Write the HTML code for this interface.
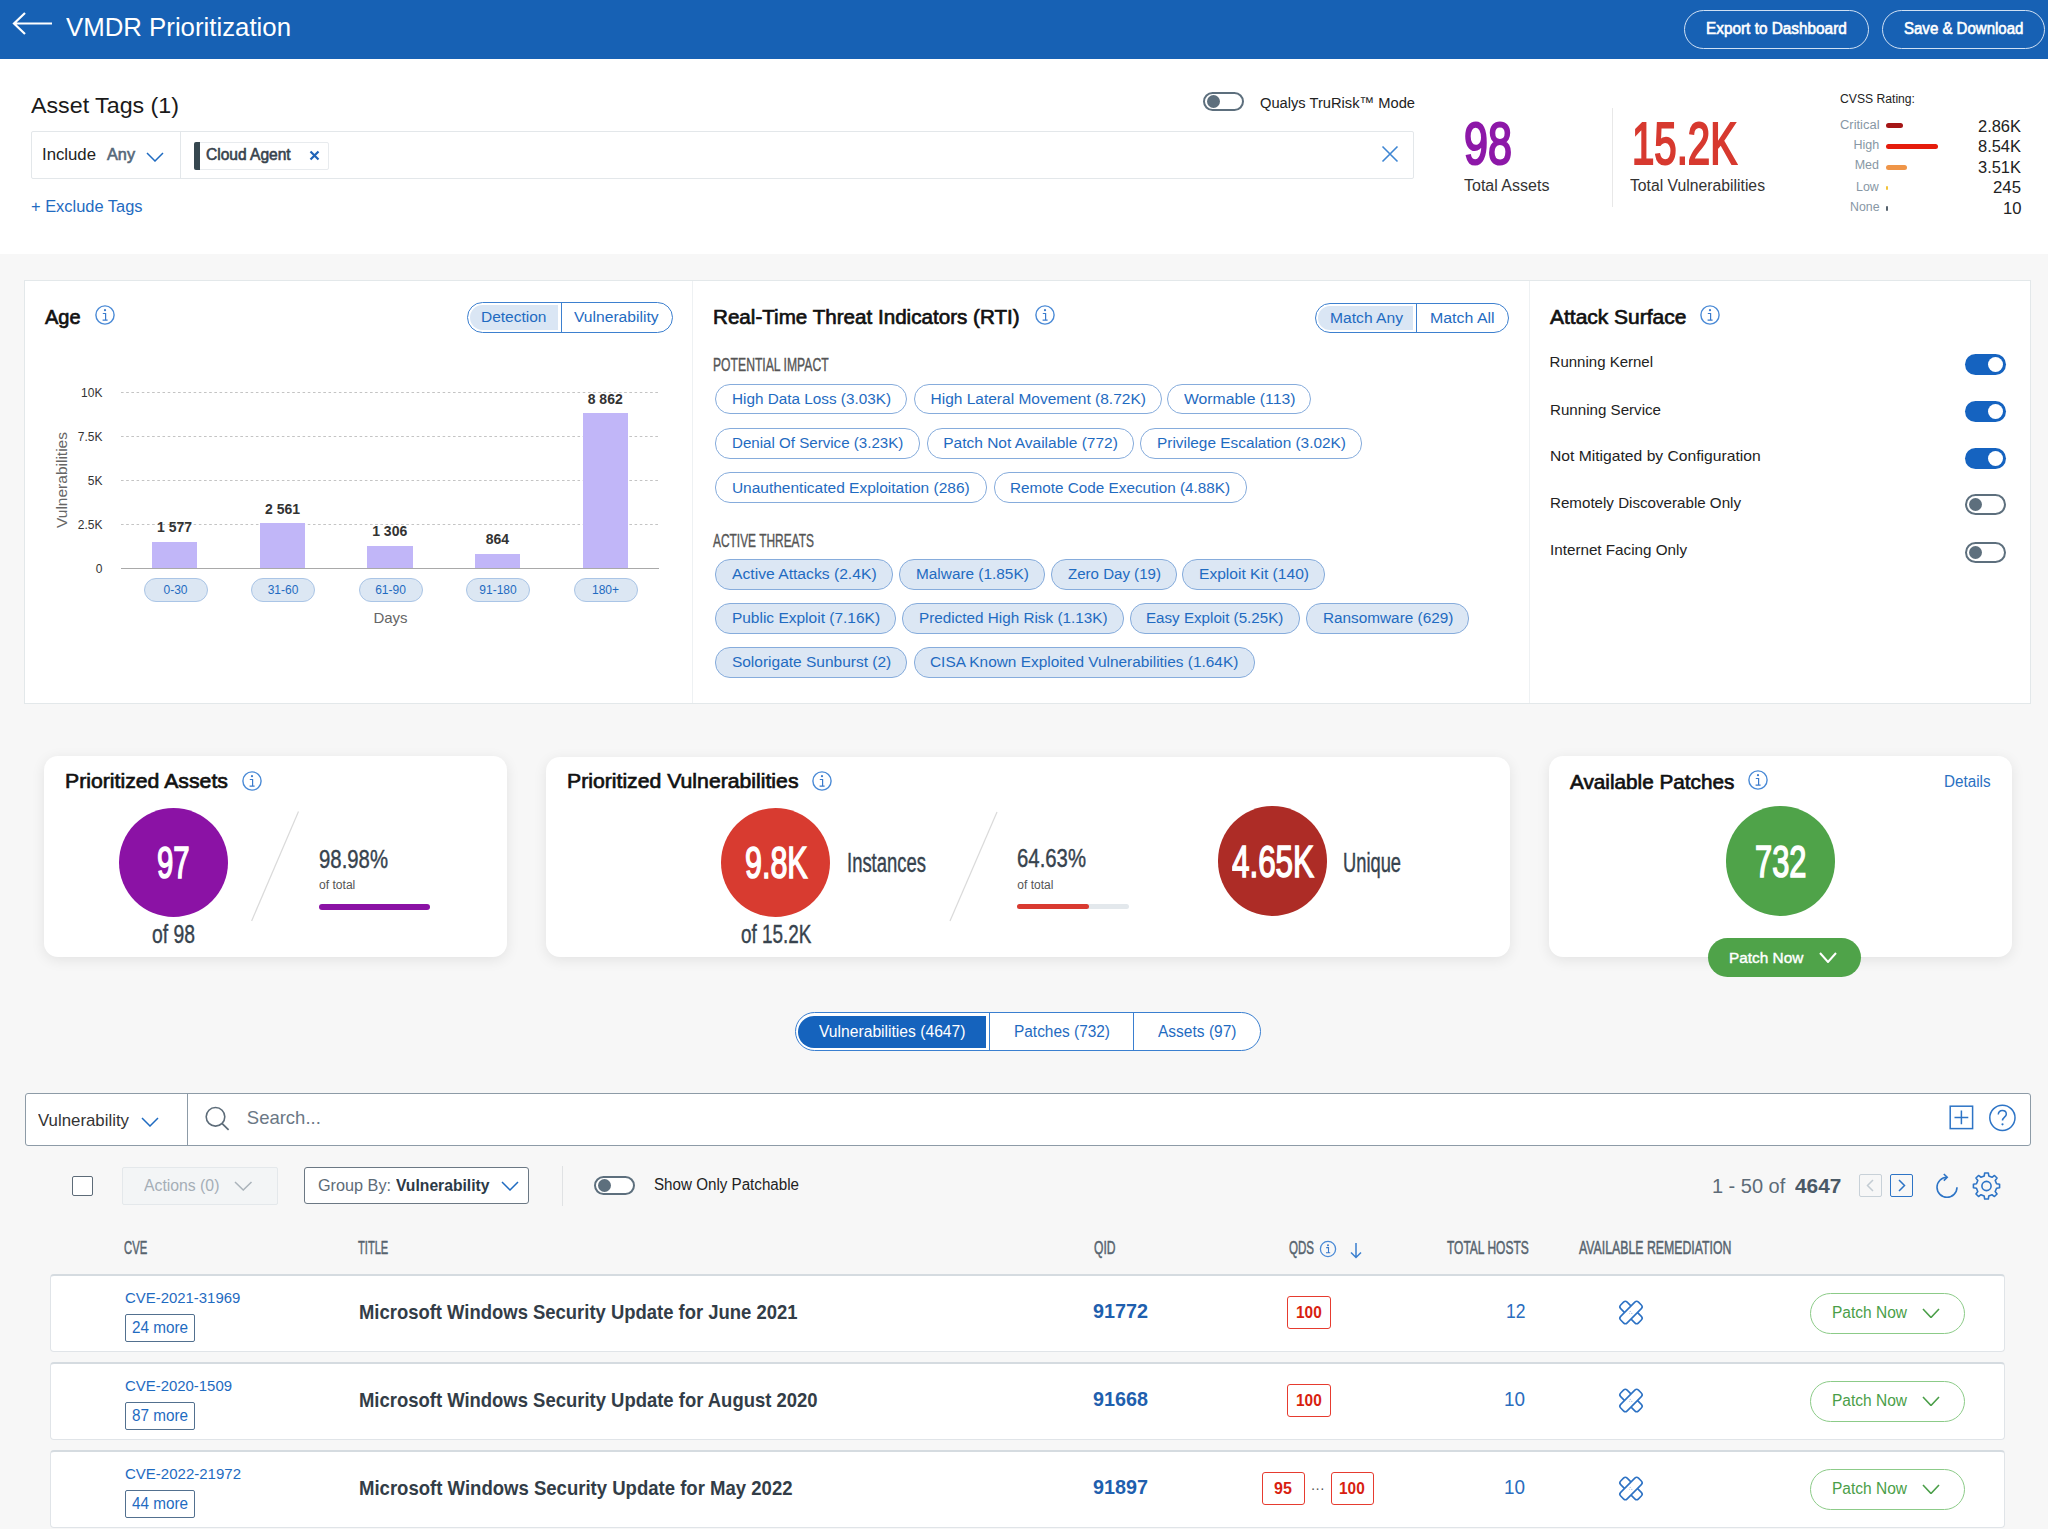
<!DOCTYPE html>
<html><head><meta charset="utf-8">
<style>
*{box-sizing:border-box;margin:0;padding:0}
html,body{width:2048px;height:1529px;overflow:hidden;background:#f7f7f7;font-family:"Liberation Sans",sans-serif;color:#222}
.a{position:absolute;white-space:nowrap}
</style></head><body>
<div class="a" style="left:0.0px;top:0.0px;width:2048.0px;height:59.0px;background:#1761b4"></div>
<svg class="a" style="left:12px;top:11px" width="42" height="25" viewBox="0 0 42 25"><path d="M2 12.5H40M13 2L2 12.5L13 23" fill="none" stroke="#fff" stroke-width="2.2"/></svg>
<div class="a" style="left:65.6px;top:13.9px;font-size:26px;line-height:1;color:#fff;transform:scaleX(0.9919);transform-origin:0 0;">VMDR Prioritization</div>
<div class="a" style="left:1684.0px;top:10.0px;width:185.0px;height:39.0px;border:1.5px solid #cfe0f4;border-radius:20px"></div>
<div class="a" style="left:1706.4px;top:21.4px;font-size:16px;line-height:1;color:#fff;transform:scaleX(0.9594);transform-origin:0 0;-webkit-text-stroke:0.6px currentColor;">Export to Dashboard</div>
<div class="a" style="left:1882.0px;top:10.0px;width:163.0px;height:39.0px;border:1.5px solid #cfe0f4;border-radius:20px"></div>
<div class="a" style="left:1904.0px;top:21.4px;font-size:16px;line-height:1;color:#fff;transform:scaleX(0.9387);transform-origin:0 0;-webkit-text-stroke:0.6px currentColor;">Save &amp; Download</div>
<div class="a" style="left:0.0px;top:59.0px;width:2048.0px;height:195.0px;background:#fff"></div>
<div class="a" style="left:31.3px;top:95.3px;font-size:22px;line-height:1;color:#1a1a1a;transform:scaleX(1.0556);transform-origin:0 0;">Asset Tags (1)</div>
<div class="a" style="left:31.0px;top:131.0px;width:1383.0px;height:48.0px;border:1px solid #e3e7ea;border-radius:2px"></div>
<div class="a" style="left:180.0px;top:131.0px;width:1.0px;height:48.0px;background:#e3e7ea"></div>
<div class="a" style="left:42.4px;top:146.9px;font-size:16px;line-height:1;color:#222;transform:scaleX(1.0466);transform-origin:0 0;">Include</div>
<div class="a" style="left:107.0px;top:146.9px;font-size:16px;line-height:1;color:#56687a;transform:scaleX(1.0156);transform-origin:0 0;-webkit-text-stroke:0.6px currentColor;">Any</div>
<svg class="a" style="left:146px;top:152px" width="18" height="10" viewBox="0 0 18 10"><path d="M1 1L9.0 9L17 1" fill="none" stroke="#1f6bc1" stroke-width="1.5"/></svg>
<div class="a" style="left:194.0px;top:142.0px;width:134.5px;height:28.0px;border:1px solid #e8ebee;border-radius:2px;background:#fff"></div>
<div class="a" style="left:194.0px;top:142.0px;width:6.0px;height:28.0px;background:#36474f;border-radius:2px 0 0 2px"></div>
<div class="a" style="left:206.0px;top:146.9px;font-size:16px;line-height:1;color:#37434d;transform:scaleX(0.9704);transform-origin:0 0;-webkit-text-stroke:0.6px currentColor;">Cloud Agent</div>
<svg class="a" style="left:309px;top:150px" width="11" height="11" viewBox="0 0 11 11"><path d="M1.5 1.5L9.5 9.5M9.5 1.5L1.5 9.5" stroke="#1f63b8" stroke-width="2.2"/></svg>
<svg class="a" style="left:1381px;top:145px" width="18" height="18" viewBox="0 0 18 18"><path d="M1.5 1.5L16.5 16.5M16.5 1.5L1.5 16.5" stroke="#3f86d3" stroke-width="1.6"/></svg>
<div class="a" style="left:31.0px;top:199.4px;font-size:16px;line-height:1;color:#1f6bc1;transform:scaleX(1.0261);transform-origin:0 0;">+ Exclude Tags</div>
<div class="a" style="left:1203.0px;top:92.0px;width:41.0px;height:19.0px;background:#fff;border:2px solid #5d6f7d;border-radius:9.5px"></div>
<div class="a" style="left:1207.0px;top:95.0px;width:13.0px;height:13.0px;background:#5d6f7d;border-radius:50%"></div>
<div class="a" style="left:1260.0px;top:94.8px;font-size:15.5px;line-height:1;color:#222;transform:scaleX(0.9471);transform-origin:0 0;">Qualys TruRisk™ Mode</div>
<div class="a" style="left:1464.0px;top:115.3px;font-size:58.5px;line-height:1;color:#8d18a8;transform:scaleX(0.7376);transform-origin:0 0;-webkit-text-stroke:2.2px currentColor;">98</div>
<div class="a" style="left:1464.0px;top:177.8px;font-size:16px;line-height:1;color:#333;">Total Assets</div>
<div class="a" style="left:1611.5px;top:108.0px;width:1.0px;height:99.0px;background:#e8e8e8"></div>
<div class="a" style="left:1632.0px;top:115.3px;font-size:58.5px;line-height:1;color:#d7392f;transform:scaleX(0.6868);transform-origin:0 0;-webkit-text-stroke:2.2px currentColor;">15.2K</div>
<div class="a" style="left:1630.0px;top:177.8px;font-size:16px;line-height:1;color:#333;transform:scaleX(0.9835);transform-origin:0 0;">Total Vulnerabilities</div>
<div class="a" style="left:1839.5px;top:92.6px;font-size:12px;line-height:1;color:#222;transform:scaleX(1.0130);transform-origin:0 0;">CVSS Rating:</div>
<div class="a" style="left:1839.5px;top:118.9px;font-size:12.5px;line-height:1;color:#8797a5;transform:scaleX(1.0341);transform-origin:0 0;">Critical</div>
<div class="a" style="left:1853.4px;top:139.4px;font-size:12.5px;line-height:1;color:#8797a5;">High</div>
<div class="a" style="left:1854.7px;top:159.4px;font-size:12.5px;line-height:1;color:#8797a5;">Med</div>
<div class="a" style="left:1856.2px;top:180.8px;font-size:12.5px;line-height:1;color:#8797a5;transform:scaleX(0.9943);transform-origin:0 0;">Low</div>
<div class="a" style="left:1849.5px;top:201.4px;font-size:12.5px;line-height:1;color:#8797a5;transform:scaleX(0.9872);transform-origin:0 0;">None</div>
<div class="a" style="left:1886.0px;top:123.2px;width:17.0px;height:5.0px;background:#a51616;border-radius:3px"></div>
<div class="a" style="left:1886.0px;top:144.3px;width:51.5px;height:5.0px;background:#e51c0c;border-radius:3px"></div>
<div class="a" style="left:1886.0px;top:164.9px;width:21.0px;height:5.0px;background:#ef9548;border-radius:3px"></div>
<div class="a" style="left:1886.0px;top:185.8px;width:2.0px;height:4.4px;background:#f2c33a;border-radius:3px"></div>
<div class="a" style="left:1886.0px;top:206.4px;width:1.5px;height:4.4px;background:#55616c;border-radius:3px"></div>
<div class="a" style="left:1978.0px;top:119.0px;font-size:16px;line-height:1;color:#222;transform:scaleX(1.0284);transform-origin:0 0;">2.86K</div>
<div class="a" style="left:1978.0px;top:139.0px;font-size:16px;line-height:1;color:#222;transform:scaleX(1.0284);transform-origin:0 0;">8.54K</div>
<div class="a" style="left:1978.0px;top:160.0px;font-size:16px;line-height:1;color:#222;transform:scaleX(1.0284);transform-origin:0 0;">3.51K</div>
<div class="a" style="left:1993.0px;top:180.2px;font-size:16px;line-height:1;color:#222;transform:scaleX(1.0488);transform-origin:0 0;">245</div>
<div class="a" style="left:2002.5px;top:201.2px;font-size:16px;line-height:1;color:#222;transform:scaleX(1.0395);transform-origin:0 0;">10</div>
<div class="a" style="left:24.0px;top:280.0px;width:2007.0px;height:424.0px;background:#fff;border:1px solid #e3e8ea"></div>
<div class="a" style="left:692.0px;top:281.0px;width:1.0px;height:422.0px;background:#eef1f3"></div>
<div class="a" style="left:1529.0px;top:281.0px;width:1.0px;height:422.0px;background:#eef1f3"></div>
<div class="a" style="left:45.0px;top:306.5px;font-size:20px;line-height:1;color:#111;-webkit-text-stroke:0.65px currentColor;">Age</div>
<svg class="a" style="left:94.5px;top:305px" width="20" height="20" viewBox="0 0 20 20"><circle cx="10.0" cy="10.0" r="9.1" fill="none" stroke="#4a8ad6" stroke-width="1.4"/><circle cx="10.0" cy="5.2" r="1.1" fill="#3a7acc"/><path d="M7.8 8.5H10.6V15.2M7.6 15.2H12.6" fill="none" stroke="#3a7acc" stroke-width="1.2"/></svg>
<div class="a" style="left:467.0px;top:302.0px;width:205.6px;height:31.0px;border:1.5px solid #3d80cf;border-radius:16px;overflow:hidden"></div>
<div class="a" style="left:470.0px;top:305.0px;width:88.0px;height:25.0px;background:#dae6f4;border-radius:13px 0 0 13px"></div>
<div class="a" style="left:560.5px;top:302.0px;width:1.5px;height:31.0px;background:#3d80cf"></div>
<div class="a" style="left:481.0px;top:309.0px;font-size:15.5px;line-height:1;color:#1f6bc1;">Detection</div>
<div class="a" style="left:574.0px;top:309.0px;font-size:15.5px;line-height:1;color:#1f6bc1;transform:scaleX(1.0088);transform-origin:0 0;">Vulnerability</div>
<div class="a" style="left:121.0px;top:391.5px;width:538.0px;height:1.5px;background-image:linear-gradient(90deg,#c4c4c4 45%,transparent 45%);background-size:5.2px 1.5px"></div>
<div class="a" style="left:81.1px;top:387.3px;font-size:12px;line-height:1;color:#333;">10K</div>
<div class="a" style="left:121.0px;top:435.5px;width:538.0px;height:1.5px;background-image:linear-gradient(90deg,#c4c4c4 45%,transparent 45%);background-size:5.2px 1.5px"></div>
<div class="a" style="left:77.8px;top:431.3px;font-size:12px;line-height:1;color:#333;">7.5K</div>
<div class="a" style="left:121.0px;top:479.5px;width:538.0px;height:1.5px;background-image:linear-gradient(90deg,#c4c4c4 45%,transparent 45%);background-size:5.2px 1.5px"></div>
<div class="a" style="left:87.8px;top:475.3px;font-size:12px;line-height:1;color:#333;">5K</div>
<div class="a" style="left:121.0px;top:523.5px;width:538.0px;height:1.5px;background-image:linear-gradient(90deg,#c4c4c4 45%,transparent 45%);background-size:5.2px 1.5px"></div>
<div class="a" style="left:77.8px;top:519.3px;font-size:12px;line-height:1;color:#333;">2.5K</div>
<div class="a" style="left:95.8px;top:563.3px;font-size:12px;line-height:1;color:#333;">0</div>
<div class="a" style="left:121.0px;top:567.5px;width:538.0px;height:1.5px;background:#a9a9a9"></div>
<div class="a" style="left:152.0px;top:542.0px;width:45.0px;height:26.2px;background:#c1b6f8"></div>
<div class="a" style="left:157.0px;top:520.1px;font-size:14px;line-height:1;color:#333;font-weight:bold;">1 577</div>
<div class="a" style="left:260.0px;top:523.4px;width:45.0px;height:44.8px;background:#c1b6f8"></div>
<div class="a" style="left:265.0px;top:501.9px;font-size:14px;line-height:1;color:#333;font-weight:bold;">2 561</div>
<div class="a" style="left:367.0px;top:545.6px;width:45.5px;height:22.6px;background:#c1b6f8"></div>
<div class="a" style="left:372.2px;top:524.1px;font-size:14px;line-height:1;color:#333;font-weight:bold;">1 306</div>
<div class="a" style="left:475.0px;top:553.5px;width:45.0px;height:14.7px;background:#c1b6f8"></div>
<div class="a" style="left:485.8px;top:532.1px;font-size:14px;line-height:1;color:#333;font-weight:bold;">864</div>
<div class="a" style="left:582.7px;top:413.4px;width:45.1px;height:154.8px;background:#c1b6f8"></div>
<div class="a" style="left:587.7px;top:391.9px;font-size:14px;line-height:1;color:#333;font-weight:bold;">8 862</div>
<div class="a" style="left:143.5px;top:578.0px;width:64.0px;height:24.0px;background:#dce7f3;border:1px solid #aac5e6;border-radius:12px"></div>
<div class="a" style="left:163.5px;top:583.8px;font-size:12px;line-height:1;color:#1f6bc1;">0-30</div>
<div class="a" style="left:251.0px;top:578.0px;width:64.0px;height:24.0px;background:#dce7f3;border:1px solid #aac5e6;border-radius:12px"></div>
<div class="a" style="left:267.7px;top:583.8px;font-size:12px;line-height:1;color:#1f6bc1;">31-60</div>
<div class="a" style="left:358.5px;top:578.0px;width:64.0px;height:24.0px;background:#dce7f3;border:1px solid #aac5e6;border-radius:12px"></div>
<div class="a" style="left:375.2px;top:583.8px;font-size:12px;line-height:1;color:#1f6bc1;">61-90</div>
<div class="a" style="left:466.0px;top:578.0px;width:64.0px;height:24.0px;background:#dce7f3;border:1px solid #aac5e6;border-radius:12px"></div>
<div class="a" style="left:479.3px;top:583.8px;font-size:12px;line-height:1;color:#1f6bc1;">91-180</div>
<div class="a" style="left:573.5px;top:578.0px;width:64.0px;height:24.0px;background:#dce7f3;border:1px solid #aac5e6;border-radius:12px"></div>
<div class="a" style="left:592.0px;top:583.8px;font-size:12px;line-height:1;color:#1f6bc1;">180+</div>
<div class="a" style="left:373.4px;top:610.2px;font-size:15px;line-height:1;color:#666;">Days</div>
<div class="a" style="left:61.5px;top:480px;width:0;height:0"><div style="position:absolute;left:0;top:0;transform:translate(-50%,-50%) rotate(-90deg);font-size:15.5px;line-height:16px;color:#666;white-space:nowrap">Vulnerabilities</div></div>
<div class="a" style="left:713.4px;top:307.0px;font-size:20px;line-height:1;color:#111;transform:scaleX(1.0306);transform-origin:0 0;-webkit-text-stroke:0.65px currentColor;">Real-Time Threat Indicators (RTI)</div>
<svg class="a" style="left:1034.5px;top:305px" width="20" height="20" viewBox="0 0 20 20"><circle cx="10.0" cy="10.0" r="9.1" fill="none" stroke="#4a8ad6" stroke-width="1.4"/><circle cx="10.0" cy="5.2" r="1.1" fill="#3a7acc"/><path d="M7.8 8.5H10.6V15.2M7.6 15.2H12.6" fill="none" stroke="#3a7acc" stroke-width="1.2"/></svg>
<div class="a" style="left:1314.7px;top:302.5px;width:194.8px;height:30.5px;border:1.5px solid #3d80cf;border-radius:16px"></div>
<div class="a" style="left:1317.7px;top:305.5px;width:95.3px;height:24.5px;background:#dae6f4;border-radius:13px 0 0 13px"></div>
<div class="a" style="left:1415.5px;top:302.5px;width:1.5px;height:30.5px;background:#3d80cf"></div>
<div class="a" style="left:1329.9px;top:310.1px;font-size:15.5px;line-height:1;color:#1f6bc1;transform:scaleX(1.0087);transform-origin:0 0;">Match Any</div>
<div class="a" style="left:1430.4px;top:310.1px;font-size:15.5px;line-height:1;color:#1f6bc1;transform:scaleX(1.0272);transform-origin:0 0;">Match All</div>
<div class="a" style="left:713.0px;top:354.9px;font-size:19px;line-height:1;color:#555;transform:scaleX(0.6404);transform-origin:0 0;-webkit-text-stroke:0.4px currentColor;">POTENTIAL IMPACT</div>
<div class="a" style="left:713.0px;top:530.5px;font-size:19px;line-height:1;color:#555;transform:scaleX(0.6274);transform-origin:0 0;-webkit-text-stroke:0.4px currentColor;">ACTIVE THREATS</div>
<div class="a" style="left:715.4px;top:383.8px;width:192.0px;height:30.3px;background:#fff;border:1.6px solid #86acdc;border-radius:15px"></div>
<div class="a" style="left:731.9px;top:390.9px;font-size:15.5px;line-height:1;color:#1f6bc1;transform:scaleX(0.9869);transform-origin:0 0;">High Data Loss (3.03K)</div>
<div class="a" style="left:914.0px;top:383.8px;width:247.7px;height:30.3px;background:#fff;border:1.6px solid #86acdc;border-radius:15px"></div>
<div class="a" style="left:930.5px;top:390.9px;font-size:15.5px;line-height:1;color:#1f6bc1;">High Lateral Movement (8.72K)</div>
<div class="a" style="left:1167.0px;top:383.8px;width:144.4px;height:30.3px;background:#fff;border:1.6px solid #86acdc;border-radius:15px"></div>
<div class="a" style="left:1183.5px;top:390.9px;font-size:15.5px;line-height:1;color:#1f6bc1;transform:scaleX(1.0156);transform-origin:0 0;">Wormable (113)</div>
<div class="a" style="left:715.4px;top:427.7px;width:204.3px;height:31.5px;background:#fff;border:1.6px solid #86acdc;border-radius:15px"></div>
<div class="a" style="left:731.9px;top:435.4px;font-size:15.5px;line-height:1;color:#1f6bc1;transform:scaleX(0.9747);transform-origin:0 0;">Denial Of Service (3.23K)</div>
<div class="a" style="left:926.7px;top:427.7px;width:207.1px;height:31.5px;background:#fff;border:1.6px solid #86acdc;border-radius:15px"></div>
<div class="a" style="left:943.2px;top:435.4px;font-size:15.5px;line-height:1;color:#1f6bc1;">Patch Not Available (772)</div>
<div class="a" style="left:1140.0px;top:427.7px;width:221.9px;height:31.5px;background:#fff;border:1.6px solid #86acdc;border-radius:15px"></div>
<div class="a" style="left:1156.5px;top:435.4px;font-size:15.5px;line-height:1;color:#1f6bc1;transform:scaleX(0.9921);transform-origin:0 0;">Privilege Escalation (3.02K)</div>
<div class="a" style="left:715.4px;top:472.0px;width:272.0px;height:31.1px;background:#fff;border:1.6px solid #86acdc;border-radius:15px"></div>
<div class="a" style="left:731.9px;top:479.5px;font-size:15.5px;line-height:1;color:#1f6bc1;">Unauthenticated Exploitation (286)</div>
<div class="a" style="left:993.5px;top:472.0px;width:253.1px;height:31.1px;background:#fff;border:1.6px solid #86acdc;border-radius:15px"></div>
<div class="a" style="left:1010.0px;top:479.5px;font-size:15.5px;line-height:1;color:#1f6bc1;transform:scaleX(0.9863);transform-origin:0 0;">Remote Code Execution (4.88K)</div>
<div class="a" style="left:715.4px;top:559.0px;width:177.6px;height:30.7px;background:#dce7f4;border:1.6px solid #86acdc;border-radius:15px"></div>
<div class="a" style="left:731.9px;top:566.3px;font-size:15.5px;line-height:1;color:#1f6bc1;transform:scaleX(1.0112);transform-origin:0 0;">Active Attacks (2.4K)</div>
<div class="a" style="left:899.0px;top:559.0px;width:145.8px;height:30.7px;background:#dce7f4;border:1.6px solid #86acdc;border-radius:15px"></div>
<div class="a" style="left:915.5px;top:566.3px;font-size:15.5px;line-height:1;color:#1f6bc1;transform:scaleX(0.9920);transform-origin:0 0;">Malware (1.85K)</div>
<div class="a" style="left:1051.0px;top:559.0px;width:125.9px;height:30.7px;background:#dce7f4;border:1.6px solid #86acdc;border-radius:15px"></div>
<div class="a" style="left:1067.5px;top:566.3px;font-size:15.5px;line-height:1;color:#1f6bc1;transform:scaleX(0.9716);transform-origin:0 0;">Zero Day (19)</div>
<div class="a" style="left:1182.0px;top:559.0px;width:143.0px;height:30.7px;background:#dce7f4;border:1.6px solid #86acdc;border-radius:15px"></div>
<div class="a" style="left:1198.5px;top:566.3px;font-size:15.5px;line-height:1;color:#1f6bc1;transform:scaleX(1.0054);transform-origin:0 0;">Exploit Kit (140)</div>
<div class="a" style="left:715.4px;top:602.5px;width:180.6px;height:31.9px;background:#dce7f4;border:1.6px solid #86acdc;border-radius:15px"></div>
<div class="a" style="left:731.9px;top:610.4px;font-size:15.5px;line-height:1;color:#1f6bc1;">Public Exploit (7.16K)</div>
<div class="a" style="left:902.0px;top:602.5px;width:221.5px;height:31.9px;background:#dce7f4;border:1.6px solid #86acdc;border-radius:15px"></div>
<div class="a" style="left:918.5px;top:610.4px;font-size:15.5px;line-height:1;color:#1f6bc1;transform:scaleX(0.9856);transform-origin:0 0;">Predicted High Risk (1.13K)</div>
<div class="a" style="left:1129.7px;top:602.5px;width:170.3px;height:31.9px;background:#dce7f4;border:1.6px solid #86acdc;border-radius:15px"></div>
<div class="a" style="left:1146.2px;top:610.4px;font-size:15.5px;line-height:1;color:#1f6bc1;transform:scaleX(0.9777);transform-origin:0 0;">Easy Exploit (5.25K)</div>
<div class="a" style="left:1306.0px;top:602.5px;width:163.3px;height:31.9px;background:#dce7f4;border:1.6px solid #86acdc;border-radius:15px"></div>
<div class="a" style="left:1322.5px;top:610.4px;font-size:15.5px;line-height:1;color:#1f6bc1;transform:scaleX(0.9886);transform-origin:0 0;">Ransomware (629)</div>
<div class="a" style="left:715.4px;top:647.0px;width:192.0px;height:30.8px;background:#dce7f4;border:1.6px solid #86acdc;border-radius:15px"></div>
<div class="a" style="left:731.9px;top:654.3px;font-size:15.5px;line-height:1;color:#1f6bc1;">Solorigate Sunburst (2)</div>
<div class="a" style="left:913.5px;top:647.0px;width:341.3px;height:30.8px;background:#dce7f4;border:1.6px solid #86acdc;border-radius:15px"></div>
<div class="a" style="left:930.0px;top:654.3px;font-size:15.5px;line-height:1;color:#1f6bc1;transform:scaleX(0.9930);transform-origin:0 0;">CISA Known Exploited Vulnerabilities (1.64K)</div>
<div class="a" style="left:1549.6px;top:306.7px;font-size:20px;line-height:1;color:#111;transform:scaleX(1.0487);transform-origin:0 0;-webkit-text-stroke:0.65px currentColor;">Attack Surface</div>
<svg class="a" style="left:1700px;top:305px" width="20" height="20" viewBox="0 0 20 20"><circle cx="10.0" cy="10.0" r="9.1" fill="none" stroke="#4a8ad6" stroke-width="1.4"/><circle cx="10.0" cy="5.2" r="1.1" fill="#3a7acc"/><path d="M7.8 8.5H10.6V15.2M7.6 15.2H12.6" fill="none" stroke="#3a7acc" stroke-width="1.2"/></svg>
<div class="a" style="left:1549.6px;top:354.2px;font-size:15px;line-height:1;color:#222;">Running Kernel</div>
<div class="a" style="left:1964.6px;top:354.0px;width:41.0px;height:21.0px;background:#1563c0;border-radius:10.5px"></div>
<div class="a" style="left:1987.6px;top:357.0px;width:15.0px;height:15.0px;background:#fff;border-radius:50%"></div>
<div class="a" style="left:1549.6px;top:401.6px;font-size:15px;line-height:1;color:#222;transform:scaleX(1.0085);transform-origin:0 0;">Running Service</div>
<div class="a" style="left:1964.6px;top:401.4px;width:41.0px;height:21.0px;background:#1563c0;border-radius:10.5px"></div>
<div class="a" style="left:1987.6px;top:404.4px;width:15.0px;height:15.0px;background:#fff;border-radius:50%"></div>
<div class="a" style="left:1549.6px;top:447.9px;font-size:15px;line-height:1;color:#222;transform:scaleX(1.0442);transform-origin:0 0;">Not Mitigated by Configuration</div>
<div class="a" style="left:1964.6px;top:447.7px;width:41.0px;height:21.0px;background:#1563c0;border-radius:10.5px"></div>
<div class="a" style="left:1987.6px;top:450.7px;width:15.0px;height:15.0px;background:#fff;border-radius:50%"></div>
<div class="a" style="left:1549.6px;top:494.6px;font-size:15px;line-height:1;color:#222;transform:scaleX(1.0093);transform-origin:0 0;">Remotely Discoverable Only</div>
<div class="a" style="left:1964.6px;top:494.3px;width:41.0px;height:21.0px;background:#fff;border:2px solid #5d6f7d;border-radius:10.5px"></div>
<div class="a" style="left:1968.6px;top:498.3px;width:13.0px;height:13.0px;background:#5d6f7d;border-radius:50%"></div>
<div class="a" style="left:1549.6px;top:542.0px;font-size:15px;line-height:1;color:#222;transform:scaleX(1.0143);transform-origin:0 0;">Internet Facing Only</div>
<div class="a" style="left:1964.6px;top:541.8px;width:41.0px;height:21.0px;background:#fff;border:2px solid #5d6f7d;border-radius:10.5px"></div>
<div class="a" style="left:1968.6px;top:545.8px;width:13.0px;height:13.0px;background:#5d6f7d;border-radius:50%"></div>
<div class="a" style="left:43.5px;top:756.0px;width:463.3px;height:201.0px;background:#fff;border-radius:14px;box-shadow:0 3px 14px rgba(0,0,0,.085)"></div>
<div class="a" style="left:546.0px;top:756.5px;width:964.0px;height:200.0px;background:#fff;border-radius:14px;box-shadow:0 3px 14px rgba(0,0,0,.085)"></div>
<div class="a" style="left:1549.4px;top:756.2px;width:462.4px;height:200.8px;background:#fff;border-radius:14px;box-shadow:0 3px 14px rgba(0,0,0,.085)"></div>
<div class="a" style="left:65.3px;top:771.2px;font-size:20px;line-height:1;color:#111;transform:scaleX(1.0620);transform-origin:0 0;-webkit-text-stroke:0.65px currentColor;">Prioritized Assets</div>
<svg class="a" style="left:242px;top:770.6px" width="20" height="20" viewBox="0 0 20 20"><circle cx="10.0" cy="10.0" r="9.1" fill="none" stroke="#4a8ad6" stroke-width="1.4"/><circle cx="10.0" cy="5.2" r="1.1" fill="#3a7acc"/><path d="M7.8 8.5H10.6V15.2M7.6 15.2H12.6" fill="none" stroke="#3a7acc" stroke-width="1.2"/></svg>
<div class="a" style="left:118.6px;top:807.8px;width:109.4px;height:109.4px;background:#8b12a5;border-radius:50%"></div>
<div class="a" style="left:156.7px;top:840.8px;font-size:44.5px;line-height:1;color:#fff;transform:scaleX(0.6586);transform-origin:0 0;-webkit-text-stroke:1.6px currentColor;">97</div>
<div class="a" style="left:151.8px;top:920.5px;font-size:26px;line-height:1;color:#37434e;transform:scaleX(0.7436);transform-origin:0 0;-webkit-text-stroke:0.4px currentColor;">of 98</div>
<svg class="a" style="left:250px;top:810px" width="50" height="113" viewBox="0 0 50 113"><path d="M48.5 1.4L1.6 111" stroke="#dadada" stroke-width="1.2"/></svg>
<div class="a" style="left:318.9px;top:845.5px;font-size:26px;line-height:1;color:#37434e;transform:scaleX(0.7825);transform-origin:0 0;-webkit-text-stroke:0.4px currentColor;">98.98%</div>
<div class="a" style="left:318.9px;top:879.2px;font-size:12px;line-height:1;color:#555;transform:scaleX(1.0077);transform-origin:0 0;">of total</div>
<div class="a" style="left:318.9px;top:904.2px;width:110.8px;height:5.8px;background:#8b12a5;border-radius:3px"></div>
<div class="a" style="left:567.0px;top:771.2px;font-size:20px;line-height:1;color:#111;transform:scaleX(1.0607);transform-origin:0 0;-webkit-text-stroke:0.65px currentColor;">Prioritized Vulnerabilities</div>
<svg class="a" style="left:812.3px;top:770.6px" width="20" height="20" viewBox="0 0 20 20"><circle cx="10.0" cy="10.0" r="9.1" fill="none" stroke="#4a8ad6" stroke-width="1.4"/><circle cx="10.0" cy="5.2" r="1.1" fill="#3a7acc"/><path d="M7.8 8.5H10.6V15.2M7.6 15.2H12.6" fill="none" stroke="#3a7acc" stroke-width="1.2"/></svg>
<div class="a" style="left:721.0px;top:807.9px;width:109.2px;height:109.2px;background:#d83b30;border-radius:50%"></div>
<div class="a" style="left:744.6px;top:840.8px;font-size:44.5px;line-height:1;color:#fff;transform:scaleX(0.6838);transform-origin:0 0;-webkit-text-stroke:1.6px currentColor;">9.8K</div>
<div class="a" style="left:846.5px;top:849.6px;font-size:27px;line-height:1;color:#37434e;transform:scaleX(0.6836);transform-origin:0 0;-webkit-text-stroke:0.4px currentColor;">Instances</div>
<div class="a" style="left:740.8px;top:920.5px;font-size:26px;line-height:1;color:#37434e;transform:scaleX(0.7269);transform-origin:0 0;-webkit-text-stroke:0.4px currentColor;">of 15.2K</div>
<svg class="a" style="left:948px;top:810px" width="51" height="113" viewBox="0 0 51 113"><path d="M49 2L2 111" stroke="#dadada" stroke-width="1.2"/></svg>
<div class="a" style="left:1017.3px;top:845.2px;font-size:26px;line-height:1;color:#37434e;transform:scaleX(0.7825);transform-origin:0 0;-webkit-text-stroke:0.4px currentColor;">64.63%</div>
<div class="a" style="left:1017.3px;top:879.0px;font-size:12px;line-height:1;color:#555;">of total</div>
<div class="a" style="left:1017.3px;top:904.1px;width:112.2px;height:5.4px;background:#e3e8ec;border-radius:3px"></div>
<div class="a" style="left:1017.3px;top:904.1px;width:72.1px;height:5.4px;background:#d93a30;border-radius:3px"></div>
<div class="a" style="left:1217.6px;top:806.3px;width:109.4px;height:109.4px;background:#ad2c26;border-radius:50%"></div>
<div class="a" style="left:1231.6px;top:839.6px;font-size:44.5px;line-height:1;color:#fff;transform:scaleX(0.7051);transform-origin:0 0;-webkit-text-stroke:1.6px currentColor;">4.65K</div>
<div class="a" style="left:1342.8px;top:849.8px;font-size:27px;line-height:1;color:#37434e;transform:scaleX(0.6778);transform-origin:0 0;-webkit-text-stroke:0.4px currentColor;">Unique</div>
<div class="a" style="left:1570.3px;top:771.5px;font-size:20px;line-height:1;color:#111;transform:scaleX(1.0364);transform-origin:0 0;-webkit-text-stroke:0.65px currentColor;">Available Patches</div>
<svg class="a" style="left:1748px;top:770.3px" width="20" height="20" viewBox="0 0 20 20"><circle cx="10.0" cy="10.0" r="9.1" fill="none" stroke="#4a8ad6" stroke-width="1.4"/><circle cx="10.0" cy="5.2" r="1.1" fill="#3a7acc"/><path d="M7.8 8.5H10.6V15.2M7.6 15.2H12.6" fill="none" stroke="#3a7acc" stroke-width="1.2"/></svg>
<div class="a" style="left:1944.4px;top:774.1px;font-size:16px;line-height:1;color:#2a70c2;transform:scaleX(0.9528);transform-origin:0 0;">Details</div>
<div class="a" style="left:1725.6px;top:806.2px;width:109.6px;height:109.6px;background:#4fa349;border-radius:50%"></div>
<div class="a" style="left:1754.6px;top:840.4px;font-size:44.5px;line-height:1;color:#fff;transform:scaleX(0.6923);transform-origin:0 0;-webkit-text-stroke:1.6px currentColor;">732</div>
<div class="a" style="left:1708.2px;top:938.0px;width:152.6px;height:38.5px;background:#4fa349;border-radius:20px"></div>
<div class="a" style="left:1729.3px;top:950.1px;font-size:15.5px;line-height:1;color:#fff;transform:scaleX(0.9926);transform-origin:0 0;-webkit-text-stroke:0.4px currentColor;">Patch Now</div>
<svg class="a" style="left:1819px;top:951.5px" width="18" height="11" viewBox="0 0 18 11"><path d="M1 1L9.0 10L17 1" fill="none" stroke="#fff" stroke-width="2"/></svg>
<div class="a" style="left:794.6px;top:1012.2px;width:466.4px;height:39.3px;background:#fff;border:1.5px solid #3a7fd0;border-radius:20px"></div>
<div class="a" style="left:797.5px;top:1015.6px;width:188.8px;height:32.4px;background:#1563bd;border-radius:16px 0 0 16px"></div>
<div class="a" style="left:988.5px;top:1012.2px;width:1.5px;height:39.3px;background:#3a7fd0"></div>
<div class="a" style="left:1132.8px;top:1012.2px;width:1.5px;height:39.3px;background:#3a7fd0"></div>
<div class="a" style="left:819.0px;top:1023.5px;font-size:16px;line-height:1;color:#fff;transform:scaleX(0.9785);transform-origin:0 0;">Vulnerabilities (4647)</div>
<div class="a" style="left:1013.6px;top:1023.5px;font-size:16px;line-height:1;color:#1f6bc1;transform:scaleX(0.9637);transform-origin:0 0;">Patches (732)</div>
<div class="a" style="left:1158.0px;top:1023.5px;font-size:16px;line-height:1;color:#1f6bc1;transform:scaleX(0.9701);transform-origin:0 0;">Assets (97)</div>
<div class="a" style="left:24.6px;top:1092.8px;width:2006.7px;height:52.8px;background:#fff;border:1.5px solid #8d9ba7;border-radius:3px"></div>
<div class="a" style="left:186.8px;top:1093.0px;width:1.5px;height:52.0px;background:#8d9ba7"></div>
<div class="a" style="left:38.3px;top:1111.6px;font-size:17px;line-height:1;color:#333;transform:scaleX(0.9894);transform-origin:0 0;">Vulnerability</div>
<svg class="a" style="left:141px;top:1116.5px" width="18" height="10" viewBox="0 0 18 10"><path d="M1 1L9.0 9L17 1" fill="none" stroke="#1f6bc1" stroke-width="1.5"/></svg>
<svg class="a" style="left:203px;top:1105px" width="28" height="27" viewBox="0 0 28 27"><circle cx="12.5" cy="11.8" r="9.3" fill="none" stroke="#5d6c79" stroke-width="1.6"/><path d="M19.2 18.6L25.6 24.8" stroke="#5d6c79" stroke-width="1.7"/></svg>
<div class="a" style="left:246.8px;top:1109.2px;font-size:18.5px;line-height:1;color:#6b7885;">Search...</div>
<svg class="a" style="left:1949px;top:1105px" width="25" height="25" viewBox="0 0 25 25"><rect x="1.2" y="1.2" width="22.4" height="22.4" fill="none" stroke="#2d74c6" stroke-width="1.5"/><path d="M12.4 5.5V19.3M5.5 12.4H19.3" stroke="#2d74c6" stroke-width="1.5"/></svg>
<svg class="a" style="left:1988px;top:1103.5px" width="29" height="28" viewBox="0 0 29 28"><circle cx="14.4" cy="13.8" r="12.6" fill="none" stroke="#2d74c6" stroke-width="1.5"/><path d="M10.3 10.6C10.3 8 12 6.6 14.3 6.6C16.6 6.6 18.3 8.1 18.3 10.2C18.3 13 14.5 13.3 14.5 16.6" fill="none" stroke="#2d74c6" stroke-width="1.5"/><circle cx="14.5" cy="20.3" r="1.1" fill="#2d74c6"/></svg>
<div class="a" style="left:72.0px;top:1176.0px;width:21.0px;height:20.2px;border:1.5px solid #5d6b78;border-radius:2px;background:#fff"></div>
<div class="a" style="left:122.3px;top:1167.0px;width:155.4px;height:38.1px;background:#f3f5f6;border:1px solid #e4e8eb;border-radius:2px"></div>
<div class="a" style="left:144.4px;top:1177.5px;font-size:16px;line-height:1;color:#a5aeb6;transform:scaleX(0.9860);transform-origin:0 0;">Actions (0)</div>
<svg class="a" style="left:234.3px;top:1181px" width="18.5" height="10" viewBox="0 0 18.5 10"><path d="M1 1L9.25 9L17.5 1" fill="none" stroke="#aab3ba" stroke-width="1.5"/></svg>
<div class="a" style="left:304.4px;top:1166.8px;width:224.2px;height:37.5px;background:#fff;border:1.5px solid #6b7884;border-radius:3px"></div>
<div class="a" style="left:318.4px;top:1177.5px;font-size:16px;line-height:1;color:#5d6b77;transform:scaleX(1.0134);transform-origin:0 0;">Group By:</div>
<div class="a" style="left:395.8px;top:1177.5px;font-size:16px;line-height:1;color:#2c3a47;font-weight:bold;transform:scaleX(0.9798);transform-origin:0 0;">Vulnerability</div>
<svg class="a" style="left:500.7px;top:1181px" width="18" height="10" viewBox="0 0 18 10"><path d="M1 1L9.0 9L17 1" fill="none" stroke="#1f6bc1" stroke-width="1.5"/></svg>
<div class="a" style="left:561.5px;top:1166.0px;width:1.3px;height:40.0px;background:#e0e2e4"></div>
<div class="a" style="left:594.2px;top:1176.4px;width:41.3px;height:19.0px;background:#fff;border:2px solid #5d6f7d;border-radius:9.5px"></div>
<div class="a" style="left:598.2px;top:1179.4px;width:13.0px;height:13.0px;background:#5d6f7d;border-radius:50%"></div>
<div class="a" style="left:654.3px;top:1177.2px;font-size:16px;line-height:1;color:#222;transform:scaleX(0.9478);transform-origin:0 0;">Show Only Patchable</div>
<div class="a" style="left:1711.9px;top:1176.1px;font-size:20px;line-height:1;color:#5d6b77;">1 - 50 of</div>
<div class="a" style="left:1794.9px;top:1176.1px;font-size:20px;line-height:1;color:#4a5966;font-weight:bold;transform:scaleX(1.0406);transform-origin:0 0;">4647</div>
<div class="a" style="left:1859.0px;top:1174.4px;width:23.3px;height:22.6px;border:1.5px solid #c8d1d8;border-radius:2px"></div>
<svg class="a" style="left:1859px;top:1174px" width="23" height="23" viewBox="0 0 23 23"><path d="M14 6L8.5 11.5L14 17" fill="none" stroke="#c3ccd3" stroke-width="1.5"/></svg>
<div class="a" style="left:1890.2px;top:1174.4px;width:23.2px;height:22.6px;border:1.5px solid #2d74c6;border-radius:2px"></div>
<svg class="a" style="left:1890px;top:1174px" width="23" height="23" viewBox="0 0 23 23"><path d="M9 6L14.5 11.5L9 17" fill="none" stroke="#2d74c6" stroke-width="1.5"/></svg>
<svg class="a" style="left:1935px;top:1173px" width="25" height="27" viewBox="0 0 25 27"><path d="M12 4.3A10 10 0 1 0 22 14.3" fill="none" stroke="#2d74c6" stroke-width="1.6"/><path d="M8.8 1L12.2 4.3L8.8 7.6" fill="none" stroke="#2d74c6" stroke-width="1.6"/></svg>
<svg class="a" style="left:1972px;top:1172px" width="30" height="28" viewBox="0 0 30 28"><path d="M27.57 12.18 L27.57 15.82 L24.54 16.31 L23.20 19.52 L25.03 21.96 L22.46 24.53 L19.96 22.73 L16.75 24.05 L16.32 27.07 L12.68 27.07 L12.19 24.04 L8.98 22.70 L6.54 24.53 L3.97 21.96 L5.77 19.46 L4.45 16.25 L1.43 15.82 L1.43 12.18 L4.46 11.69 L5.80 8.48 L3.97 6.04 L6.54 3.47 L9.04 5.27 L12.25 3.95 L12.68 0.93 L16.32 0.93 L16.81 3.96 L20.02 5.30 L22.46 3.47 L25.03 6.04 L23.23 8.54 L24.55 11.75Z" fill="none" stroke="#2d74c6" stroke-width="1.6" stroke-linejoin="round"/><circle cx="14.5" cy="14" r="4.6" fill="none" stroke="#2d74c6" stroke-width="1.6"/></svg>
<div class="a" style="left:124.2px;top:1239.2px;font-size:18.7px;line-height:1;color:#56636e;transform:scaleX(0.6034);transform-origin:0 0;-webkit-text-stroke:0.5px currentColor;">CVE</div>
<div class="a" style="left:358.1px;top:1239.2px;font-size:18.7px;line-height:1;color:#56636e;transform:scaleX(0.5951);transform-origin:0 0;-webkit-text-stroke:0.5px currentColor;">TITLE</div>
<div class="a" style="left:1093.7px;top:1239.2px;font-size:18.7px;line-height:1;color:#56636e;transform:scaleX(0.6467);transform-origin:0 0;-webkit-text-stroke:0.5px currentColor;">QID</div>
<div class="a" style="left:1288.5px;top:1239.2px;font-size:18.7px;line-height:1;color:#56636e;transform:scaleX(0.6194);transform-origin:0 0;-webkit-text-stroke:0.5px currentColor;">QDS</div>
<div class="a" style="left:1447.2px;top:1239.2px;font-size:18.7px;line-height:1;color:#56636e;transform:scaleX(0.6418);transform-origin:0 0;-webkit-text-stroke:0.5px currentColor;">TOTAL HOSTS</div>
<div class="a" style="left:1579.0px;top:1239.2px;font-size:18.7px;line-height:1;color:#56636e;transform:scaleX(0.6581);transform-origin:0 0;-webkit-text-stroke:0.5px currentColor;">AVAILABLE REMEDIATION</div>
<svg class="a" style="left:1319px;top:1240px" width="18" height="18" viewBox="0 0 18 18"><circle cx="9" cy="9" r="7.6" fill="none" stroke="#4a8ad6" stroke-width="1.3"/><circle cx="9" cy="5.2" r="1" fill="#3a7acc"/><path d="M7.2 7.6H9.5V12.8M7 12.8H11.2" fill="none" stroke="#3a7acc" stroke-width="1.1"/></svg>
<svg class="a" style="left:1349px;top:1242px" width="14" height="17" viewBox="0 0 14 17"><path d="M7 1V15.5M2 10.5L7 15.5L12 10.5" fill="none" stroke="#3a7fcf" stroke-width="1.5"/></svg>
<div class="a" style="left:50.0px;top:1274.0px;width:1954.6px;height:77.5px;background:#fff;border:1px solid #e0e4e8;border-top:2px solid #d5dbe0;border-radius:4px"></div>
<div class="a" style="left:125.4px;top:1289.6px;font-size:15.5px;line-height:1;color:#1f6bc1;transform:scaleX(0.9626);transform-origin:0 0;">CVE-2021-31969</div>
<div class="a" style="left:125.2px;top:1314.2px;width:69.6px;height:28.0px;border:1px solid #52708f;border-radius:2px"></div>
<div class="a" style="left:131.6px;top:1320.4px;font-size:16px;line-height:1;color:#1f6bc1;transform:scaleX(0.9540);transform-origin:0 0;">24 more</div>
<div class="a" style="left:359.3px;top:1302.4px;font-size:20.5px;line-height:1;color:#333d47;font-weight:bold;transform:scaleX(0.8997);transform-origin:0 0;">Microsoft Windows Security Update for June 2021</div>
<div class="a" style="left:1093.2px;top:1301.4px;font-size:20px;line-height:1;color:#1f5fae;font-weight:bold;transform:scaleX(0.9889);transform-origin:0 0;">91772</div>
<div class="a" style="left:1287.3px;top:1296.4px;width:43.4px;height:33.0px;border:1.5px solid #e63b2f;border-radius:3px"></div>
<div class="a" style="left:1296.2px;top:1304.8px;font-size:16px;line-height:1;color:#d81e10;font-weight:bold;transform:scaleX(0.9627);transform-origin:0 0;">100</div>
<div class="a" style="left:1505.8px;top:1301.4px;font-size:20px;line-height:1;color:#2a6cbe;transform:scaleX(0.8765);transform-origin:0 0;">12</div>
<svg class="a" style="left:1617px;top:1299px" width="28" height="27" viewBox="0 0 28 27"><g stroke="#2d72c4" stroke-width="1.6"><rect x="-4.6" y="-12.6" width="9.2" height="25.2" rx="2.6" fill="none" transform="translate(14 13.5) rotate(-45)"/><rect x="-4.6" y="-12.6" width="9.2" height="25.2" rx="2.6" fill="#fff" transform="translate(14 13.5) rotate(45)"/></g><g fill="#9dbde6"><circle cx="13.2" cy="12.4" r=".6"/><circle cx="14.8" cy="14.4" r=".6"/><circle cx="12.6" cy="14.2" r=".5"/></g></svg>
<div class="a" style="left:1809.7px;top:1292.7px;width:155.8px;height:40.9px;border:1.8px solid #8ccb88;border-radius:21px"></div>
<div class="a" style="left:1832.3px;top:1304.6px;font-size:16px;line-height:1;color:#4a9e48;transform:scaleX(0.9694);transform-origin:0 0;">Patch Now</div>
<svg class="a" style="left:1921.5px;top:1307.5px" width="18" height="10.5" viewBox="0 0 18 10.5"><path d="M1 1L9.0 9.5L17 1" fill="none" stroke="#4a9e48" stroke-width="1.6"/></svg>
<div class="a" style="left:50.0px;top:1362.0px;width:1954.6px;height:77.5px;background:#fff;border:1px solid #e0e4e8;border-top:2px solid #d5dbe0;border-radius:4px"></div>
<div class="a" style="left:125.4px;top:1377.6px;font-size:15.5px;line-height:1;color:#1f6bc1;transform:scaleX(0.9626);transform-origin:0 0;">CVE-2020-1509</div>
<div class="a" style="left:125.2px;top:1402.2px;width:69.6px;height:28.0px;border:1px solid #52708f;border-radius:2px"></div>
<div class="a" style="left:131.6px;top:1408.4px;font-size:16px;line-height:1;color:#1f6bc1;transform:scaleX(0.9540);transform-origin:0 0;">87 more</div>
<div class="a" style="left:359.3px;top:1390.4px;font-size:20.5px;line-height:1;color:#333d47;font-weight:bold;transform:scaleX(0.9002);transform-origin:0 0;">Microsoft Windows Security Update for August 2020</div>
<div class="a" style="left:1093.2px;top:1389.4px;font-size:20px;line-height:1;color:#1f5fae;font-weight:bold;transform:scaleX(0.9889);transform-origin:0 0;">91668</div>
<div class="a" style="left:1287.3px;top:1384.4px;width:43.4px;height:33.0px;border:1.5px solid #e63b2f;border-radius:3px"></div>
<div class="a" style="left:1296.2px;top:1392.8px;font-size:16px;line-height:1;color:#d81e10;font-weight:bold;transform:scaleX(0.9627);transform-origin:0 0;">100</div>
<div class="a" style="left:1504.3px;top:1389.4px;font-size:20px;line-height:1;color:#2a6cbe;transform:scaleX(0.9440);transform-origin:0 0;">10</div>
<svg class="a" style="left:1617px;top:1387px" width="28" height="27" viewBox="0 0 28 27"><g stroke="#2d72c4" stroke-width="1.6"><rect x="-4.6" y="-12.6" width="9.2" height="25.2" rx="2.6" fill="none" transform="translate(14 13.5) rotate(-45)"/><rect x="-4.6" y="-12.6" width="9.2" height="25.2" rx="2.6" fill="#fff" transform="translate(14 13.5) rotate(45)"/></g><g fill="#9dbde6"><circle cx="13.2" cy="12.4" r=".6"/><circle cx="14.8" cy="14.4" r=".6"/><circle cx="12.6" cy="14.2" r=".5"/></g></svg>
<div class="a" style="left:1809.7px;top:1380.7px;width:155.8px;height:40.9px;border:1.8px solid #8ccb88;border-radius:21px"></div>
<div class="a" style="left:1832.3px;top:1392.6px;font-size:16px;line-height:1;color:#4a9e48;transform:scaleX(0.9694);transform-origin:0 0;">Patch Now</div>
<svg class="a" style="left:1921.5px;top:1395.5px" width="18" height="10.5" viewBox="0 0 18 10.5"><path d="M1 1L9.0 9.5L17 1" fill="none" stroke="#4a9e48" stroke-width="1.6"/></svg>
<div class="a" style="left:50.0px;top:1450.0px;width:1954.6px;height:77.5px;background:#fff;border:1px solid #e0e4e8;border-top:2px solid #d5dbe0;border-radius:4px"></div>
<div class="a" style="left:125.4px;top:1465.6px;font-size:15.5px;line-height:1;color:#1f6bc1;transform:scaleX(0.9684);transform-origin:0 0;">CVE-2022-21972</div>
<div class="a" style="left:125.2px;top:1490.2px;width:69.6px;height:28.0px;border:1px solid #52708f;border-radius:2px"></div>
<div class="a" style="left:131.6px;top:1496.4px;font-size:16px;line-height:1;color:#1f6bc1;transform:scaleX(0.9540);transform-origin:0 0;">44 more</div>
<div class="a" style="left:359.3px;top:1478.4px;font-size:20.5px;line-height:1;color:#333d47;font-weight:bold;transform:scaleX(0.9043);transform-origin:0 0;">Microsoft Windows Security Update for May 2022</div>
<div class="a" style="left:1093.2px;top:1477.4px;font-size:20px;line-height:1;color:#1f5fae;font-weight:bold;transform:scaleX(0.9889);transform-origin:0 0;">91897</div>
<div class="a" style="left:1261.5px;top:1472.4px;width:43.0px;height:33.0px;border:1.5px solid #e63b2f;border-radius:3px"></div>
<div class="a" style="left:1274.1px;top:1480.8px;font-size:16px;line-height:1;color:#d81e10;font-weight:bold;">95</div>
<div class="a" style="left:1310.7px;top:1481.1px;font-size:14px;line-height:1;color:#555;">···</div>
<div class="a" style="left:1330.5px;top:1472.4px;width:43.5px;height:33.0px;border:1.5px solid #e63b2f;border-radius:3px"></div>
<div class="a" style="left:1339.4px;top:1480.8px;font-size:16px;line-height:1;color:#d81e10;font-weight:bold;transform:scaleX(0.9627);transform-origin:0 0;">100</div>
<div class="a" style="left:1504.3px;top:1477.4px;font-size:20px;line-height:1;color:#2a6cbe;transform:scaleX(0.9440);transform-origin:0 0;">10</div>
<svg class="a" style="left:1617px;top:1475px" width="28" height="27" viewBox="0 0 28 27"><g stroke="#2d72c4" stroke-width="1.6"><rect x="-4.6" y="-12.6" width="9.2" height="25.2" rx="2.6" fill="none" transform="translate(14 13.5) rotate(-45)"/><rect x="-4.6" y="-12.6" width="9.2" height="25.2" rx="2.6" fill="#fff" transform="translate(14 13.5) rotate(45)"/></g><g fill="#9dbde6"><circle cx="13.2" cy="12.4" r=".6"/><circle cx="14.8" cy="14.4" r=".6"/><circle cx="12.6" cy="14.2" r=".5"/></g></svg>
<div class="a" style="left:1809.7px;top:1468.7px;width:155.8px;height:40.9px;border:1.8px solid #8ccb88;border-radius:21px"></div>
<div class="a" style="left:1832.3px;top:1480.6px;font-size:16px;line-height:1;color:#4a9e48;transform:scaleX(0.9694);transform-origin:0 0;">Patch Now</div>
<svg class="a" style="left:1921.5px;top:1483.5px" width="18" height="10.5" viewBox="0 0 18 10.5"><path d="M1 1L9.0 9.5L17 1" fill="none" stroke="#4a9e48" stroke-width="1.6"/></svg>
</body></html>
